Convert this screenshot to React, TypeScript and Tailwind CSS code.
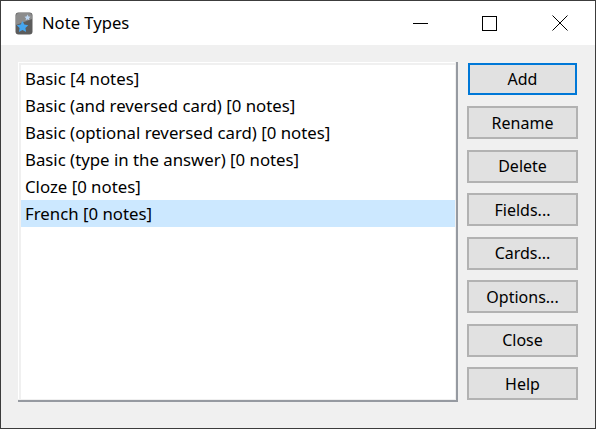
const font = { fontFamily: '"Noto Sans", sans-serif' }

const notes = [
  'Basic [4 notes]',
  'Basic (and reversed card) [0 notes]',
  'Basic (optional reversed card) [0 notes]',
  'Basic (type in the answer) [0 notes]',
  'Cloze [0 notes]',
  'French [0 notes]',
]

const buttons = ['Add', 'Rename', 'Delete', 'Fields...', 'Cards...', 'Options...', 'Close', 'Help']

function AppIcon() {
  return (
    <svg width="18" height="23" viewBox="0 0 18 23">
      <rect x="0.5" y="0.5" width="17" height="22" rx="3" fill="#5c5c5c" />
      <path d="M1 4a3 3 0 0 1 3-3h10a3 3 0 0 1 3 3v3L1 13z" fill="#8c8c8c" />
      <path d="M12.500 2.500l1 2 2 .3-1.500 1.400.4 2-1.900-1-1.900 1 .4-2-1.500-1.400 2-.3z" fill="#bcd6f2" />
      <path d="M7.500 9l1.800 3.600 4 .6-2.900 2.800.7 4-3.600-1.900-3.600 1.900.7-4-2.900-2.800 4-.6z" fill="#45a5ee" />
    </svg>
  )
}

export default function App() {
  return (
    <div className="w-[596px] h-[429px] flex flex-col bg-[#f0f0f0] border border-[#3c3c3c] text-[16px] text-black" style={font}>
      <div className="h-[44px] bg-white flex items-center">
        <div className="ml-[14px] mr-[9px] flex">
          <AppIcon />
        </div>
        <span className="text-[16.6px]">Note Types</span>
        <div className="ml-auto flex items-center mr-[27px]">
          <div className="w-[15px] h-px bg-black mr-[54px]" />
          <div className="w-[15px] h-[15px] border border-black mr-[55px]" />
          <svg width="16" height="16" viewBox="0 0 16 16" stroke="black" fill="none">
            <path d="M0.500 0.500L15.500 15.500M15.500 0.500L0.500 15.500" />
          </svg>
        </div>
      </div>
      <div className="flex-1 flex pl-[17px] pr-[17px] pt-[17px] pb-[26px] gap-[9px]">
        <div className="w-[440px] border-b-2 border-r-2 border-[#969aa1] bg-[#f0f0f0] pr-[1px] pb-[1px]">
          <div className="h-full border-l border-t border-white pl-[2px] pt-[2px]">
            <div className="h-full bg-white text-[16.8px]">
              {notes.map((n) => (
                <div key={n} className={`h-[27px] pl-[4px] leading-[27px] ${n.startsWith('French') ? 'bg-[#cce8ff]' : ''}`}>
                  {n}
                </div>
              ))}
            </div>
          </div>
        </div>
        <div className="w-[111px] mt-[0.5px] mb-[2px] flex flex-col justify-between">
          {buttons.map((b) => (
            <div key={b} className="h-[33px] flex">
              <button
                className={`flex-1 bg-[#e1e1e1] border-2 ${b === 'Add' ? 'mx-px h-[32px] border-[#0078d7]' : 'h-[33px] border-[#b2b2b2]'}`}
              >
                {b}
              </button>
            </div>
          ))}
        </div>
      </div>
    </div>
  )
}
